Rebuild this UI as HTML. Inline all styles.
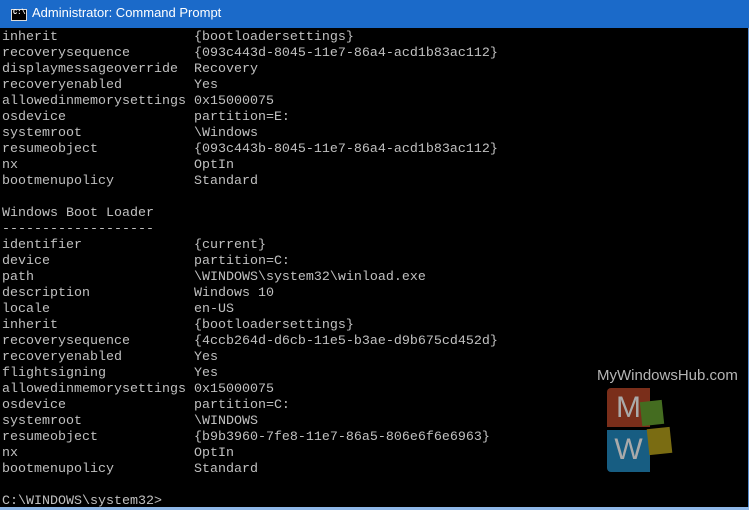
<!DOCTYPE html>
<html><head><style>
html,body{margin:0;padding:0;background:#000;width:749px;height:510px;overflow:hidden;position:relative}
#tb{position:absolute;left:0;top:0;width:749px;height:28px;background:#1b6ac9}
#tb .t{position:absolute;left:32px;top:5px;color:#fff;font:13px "Liberation Sans",sans-serif}
#ic{position:absolute;left:11px;top:9px;width:14px;height:10px;background:#000;border:1px solid #ddd}
#ic span{position:absolute;left:1px;top:-1px;color:#fff;font:bold 7px "Liberation Mono",monospace}
pre{position:absolute;left:2px;top:30px;margin:0;color:#c0c0c0;font:13.33px/16px "Liberation Mono",monospace;letter-spacing:0}
#bot{position:absolute;left:0;top:507px;width:749px;height:3px;background:#8fb8e8}
#rb{position:absolute;right:0;top:28px;width:1px;height:482px;background:#5b8fd0}
#wm{position:absolute;left:597px;top:367px;color:#b5b5b5;font:15px "Liberation Sans",sans-serif}
.b{position:absolute;color:#aaa;font:30px "Liberation Sans",sans-serif;text-align:center;line-height:40px}
</style></head><body>
<div id="tb"><div id="ic"><span>C:\</span></div><div class="t">Administrator: Command Prompt</div></div>
<pre>inherit                 {bootloadersettings}
recoverysequence        {093c443d-8045-11e7-86a4-acd1b83ac112}
displaymessageoverride  Recovery
recoveryenabled         Yes
allowedinmemorysettings 0x15000075
osdevice                partition=E:
systemroot              \Windows
resumeobject            {093c443b-8045-11e7-86a4-acd1b83ac112}
nx                      OptIn
bootmenupolicy          Standard

Windows Boot Loader
-------------------
identifier              {current}
device                  partition=C:
path                    \WINDOWS\system32\winload.exe
description             Windows 10
locale                  en-US
inherit                 {bootloadersettings}
recoverysequence        {4ccb264d-d6cb-11e5-b3ae-d9b675cd452d}
recoveryenabled         Yes
flightsigning           Yes
allowedinmemorysettings 0x15000075
osdevice                partition=C:
systemroot              \WINDOWS
resumeobject            {b9b3960-7fe8-11e7-86a5-806e6f6e6963}
nx                      OptIn
bootmenupolicy          Standard

C:\WINDOWS\system32&gt;</pre>
<div id="wm">MyWindowsHub.com</div>
<div class="b" style="left:607px;top:388px;width:43px;height:39px;background:#7a2e1a;border-radius:4px 0 0 0">M</div>
<div class="b" style="left:607px;top:430px;width:43px;height:42px;background:#175d82;border-radius:0 0 0 4px">W</div>
<div style="position:absolute;left:641px;top:401px;width:22px;height:24px;background:#446c20;transform:rotate(-6deg)"></div>
<div style="position:absolute;left:648px;top:428px;width:23px;height:26px;background:#7a6c12;transform:rotate(-6deg)"></div>
<div id="rb"></div><div id="bot"></div>
</body></html>
